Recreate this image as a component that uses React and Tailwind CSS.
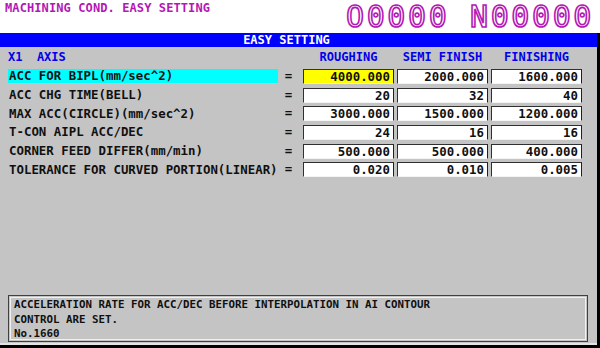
const rows = [
  { label: "ACC FOR BIPL(mm/sec^2)", values: ["4000.000", "2000.000", "1600.000"], active: true },
  { label: "ACC CHG TIME(BELL)", values: ["20", "32", "40"] },
  { label: "MAX ACC(CIRCLE)(mm/sec^2)", values: ["3000.000", "1500.000", "1200.000"] },
  { label: "T-CON AIPL ACC/DEC", values: ["24", "16", "16"] },
  { label: "CORNER FEED DIFFER(mm/min)", values: ["500.000", "500.000", "400.000"] },
  { label: "TOLERANCE FOR CURVED PORTION(LINEAR)", values: ["0.020", "0.010", "0.005"] },
];

const columns = ["ROUGHING", "SEMI FINISH", "FINISHING"];

export default function App() {
  return (
    <div className="w-[600px] h-[348px] bg-white overflow-hidden flex flex-col font-['DejaVu_Sans_Mono',monospace] font-bold">
      {/* Top title line */}
      <div className="h-[33px] flex justify-between items-start">
        <div className="pl-[5px] pt-[1px] text-[12px] leading-[14px] text-[#b418b4] tracking-[0.1px]">
          MACHINING COND. EASY SETTING
        </div>
        <div className="pr-[6px] pt-[2px] text-[30px] leading-[30px] font-normal text-[#b418b4] [-webkit-text-fill-color:white] [-webkit-text-stroke:1.6px_#b418b4] tracking-[2.6px]">
          O0000 N00000
        </div>
      </div>

      {/* Main panel */}
      <div className="flex-1 flex flex-col border-r-[3px] border-r-black border-b-[3px] border-b-black">
        <div className="h-[14px] bg-[#0000ff] text-white text-[12px] leading-[14px] text-center pr-[24px]">
          EASY SETTING
        </div>
        <div className="flex-1 bg-[#c4c4c4] flex flex-col pl-[8px] pr-[12px] border-b-2 border-b-[#e4e4e4]">
          {/* Column header */}
          <div className="h-[20px] flex items-center text-[12px] text-[#0000ee]">
            <div className="w-[295px] whitespace-pre">X1  AXIS</div>
            {columns.map((c) => (
              <div key={c} className="w-[91px] mr-[3px] text-center">
                {c}
              </div>
            ))}
          </div>

          {/* Parameter rows */}
          {rows.map((r) => (
            <div key={r.label} className="h-[18.7px] flex items-center text-[12.4px] text-[#101010]">
              <div
                className={
                  "w-[270px] h-[14px] leading-[14px] pl-[1px] " + (r.active ? "bg-[#00ffff]" : "")
                }
              >
                {r.label}
              </div>
              <div className="w-[25px] text-center pr-[4px]">=</div>
              {r.values.map((v, i) => (
                <div
                  key={i}
                  className={
                    "w-[91px] h-[15px] mr-[3px] leading-[13px] text-right pr-[3px] border border-t-[#303030] border-l-[#303030] border-r-[#202020] border-b-[#f4f4f4] " +
                    (r.active && i === 0 ? "bg-[#ffff00]" : "bg-white")
                  }
                >
                  {v}
                </div>
              ))}
            </div>
          ))}

          <div className="flex-1" />

          {/* Help message */}
          <div className="mb-[1px] mr-[-3px] h-[47px] border border-[#404040] p-[1px]">
            <div className="h-full border border-[#f0f0f0] pl-[3px] text-[10.8px] leading-[14.6px] text-[#101010]">
              <div>ACCELERATION RATE FOR ACC/DEC BEFORE INTERPOLATION IN AI CONTOUR</div>
              <div>CONTROL ARE SET.</div>
              <div>No.1660</div>
            </div>
          </div>
        </div>
      </div>
    </div>
  );
}
